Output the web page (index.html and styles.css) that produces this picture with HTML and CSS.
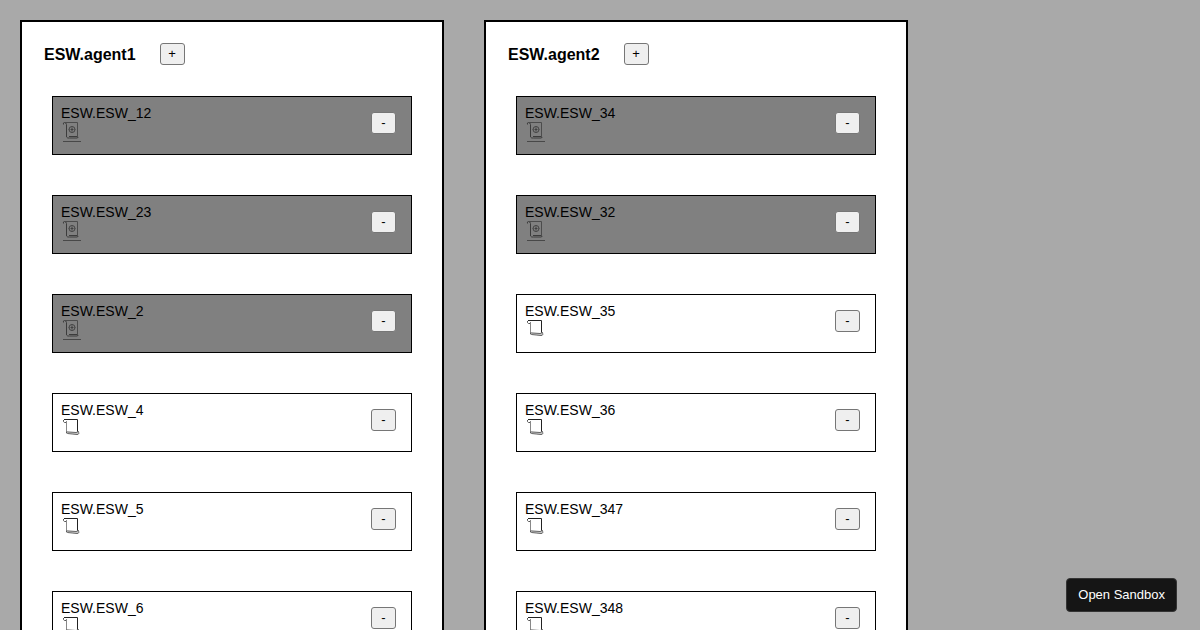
FILE: index.html
```html
<!DOCTYPE html>
<html lang="en">
<head>
    <meta charset="UTF-8">
    <meta name="viewport" content="width=device-width, initial-scale=1.0">
    <title>ESW agents</title>
    <link rel="stylesheet" href="styles.css">
</head>
<body>
    <!-- shared icons -->
    <svg class="icon-defs" aria-hidden="true">
        <symbol id="scroll" viewBox="0 0 20 24">
            <path d="M5.500 15V3" fill="none" stroke="#888"/>
            <path d="M5 4.500H3.500Q2 4 2.500 2" fill="none" stroke="#555"/>
            <path d="M3 1.500H16.500V13.500" fill="none" stroke="#222"/>
            <path d="M5 14.500Q6 13.500 8 14L15 14.500Q17 14.500 17 13Q19 16.500 16 16.500Q11 16 6.500 15.500Z" fill="#ccc" stroke="#444" stroke-width="0.800"/>
        </symbol>
        <symbol id="certificate" viewBox="0 0 20 24">
            <path d="M5.500 16V3.500Q5 1.500 3.500 1.500Q1.800 1.500 2.500 3.500" fill="none" stroke="#3c3c3c"/>
            <path d="M3.500 1.500H16.500V15" fill="none" stroke="#4c4c4c"/>
            <path d="M5.500 16Q6.500 17.500 8.500 17H16Q18 16.500 16.500 15.500H8" fill="none" stroke="#3c3c3c"/>
            <circle cx="11" cy="8.500" r="3" fill="none" stroke="#444"/>
            <circle cx="11" cy="8.500" r="1" fill="#333"/>
            <path d="M11 5V12M7.500 8.500H14.500" fill="none" stroke="#444" stroke-width="0.500"/>
            <path d="M2 20.500H20" fill="none" stroke="#484848"/>
        </symbol>
    </svg>

    <main class="board">
        <section class="agent">
            <header class="agent-header">
                <h2 class="agent-name">ESW.agent1</h2>
                <button type="button" aria-label="Add to ESW.agent1">+</button>
            </header>
            <div class="card-list">
                <div class="card done">
                    <div class="card-info">
                        <span>ESW.ESW_12</span>
                        <svg class="icon"><use href="#certificate"/></svg>
                    </div>
                    <button type="button">-</button>
                </div>
                <div class="card done">
                    <div class="card-info">
                        <span>ESW.ESW_23</span>
                        <svg class="icon"><use href="#certificate"/></svg>
                    </div>
                    <button type="button">-</button>
                </div>
                <div class="card done">
                    <div class="card-info">
                        <span>ESW.ESW_2</span>
                        <svg class="icon"><use href="#certificate"/></svg>
                    </div>
                    <button type="button">-</button>
                </div>
                <div class="card">
                    <div class="card-info">
                        <span>ESW.ESW_4</span>
                        <svg class="icon"><use href="#scroll"/></svg>
                    </div>
                    <button type="button">-</button>
                </div>
                <div class="card">
                    <div class="card-info">
                        <span>ESW.ESW_5</span>
                        <svg class="icon"><use href="#scroll"/></svg>
                    </div>
                    <button type="button">-</button>
                </div>
                <div class="card">
                    <div class="card-info">
                        <span>ESW.ESW_6</span>
                        <svg class="icon"><use href="#scroll"/></svg>
                    </div>
                    <button type="button">-</button>
                </div>
            </div>
        </section>

        <section class="agent">
            <header class="agent-header">
                <h2 class="agent-name">ESW.agent2</h2>
                <button type="button" aria-label="Add to ESW.agent2">+</button>
            </header>
            <div class="card-list">
                <div class="card done">
                    <div class="card-info">
                        <span>ESW.ESW_34</span>
                        <svg class="icon"><use href="#certificate"/></svg>
                    </div>
                    <button type="button">-</button>
                </div>
                <div class="card done">
                    <div class="card-info">
                        <span>ESW.ESW_32</span>
                        <svg class="icon"><use href="#certificate"/></svg>
                    </div>
                    <button type="button">-</button>
                </div>
                <div class="card">
                    <div class="card-info">
                        <span>ESW.ESW_35</span>
                        <svg class="icon"><use href="#scroll"/></svg>
                    </div>
                    <button type="button">-</button>
                </div>
                <div class="card">
                    <div class="card-info">
                        <span>ESW.ESW_36</span>
                        <svg class="icon"><use href="#scroll"/></svg>
                    </div>
                    <button type="button">-</button>
                </div>
                <div class="card">
                    <div class="card-info">
                        <span>ESW.ESW_347</span>
                        <svg class="icon"><use href="#scroll"/></svg>
                    </div>
                    <button type="button">-</button>
                </div>
                <div class="card">
                    <div class="card-info">
                        <span>ESW.ESW_348</span>
                        <svg class="icon"><use href="#scroll"/></svg>
                    </div>
                    <button type="button">-</button>
                </div>
            </div>
        </section>
    </main>

    <button type="button" class="sandbox-button">Open Sandbox</button>
</body>
</html>
```
FILE: styles.css
```css
* {
    box-sizing: border-box;
}

body {
    margin: 0;
    background-color: darkgray;
    color: #000;
    font-family: Helvetica, "Liberation Sans", Arial, sans-serif;
    font-size: 14px;
    line-height: 16px;
}

button {
    border: 1px solid #767676;
    border-radius: 3px;
    background-color: #efefef;
    color: #000;
    font-family: inherit;
    font-size: 13px;
    line-height: 18px;
}

.icon-defs {
    display: none;
}

.board {
    display: flex;
    align-items: flex-start;
    gap: 40px;
    padding: 20px;
}

.agent {
    width: 424px;
    padding: 20px 22px;
    border: 2px solid #000;
    background-color: #fff;
}

.agent-header {
    display: flex;
    align-items: center;
    gap: 24px;
    height: 24px;
}

.agent-name {
    margin: 0;
    padding-top: 2px;
    font-size: 16px;
    line-height: 20px;
}

.card-list {
    display: flex;
    flex-direction: column;
    gap: 40px;
    padding: 30px 8px 20px;
}

.card {
    display: flex;
    justify-content: space-between;
    align-items: flex-start;
    padding: 8px 15px 8px 8px;
    border: 1px solid #000;
}

.card.done {
    background-color: gray;
}

.card > button {
    margin-top: 7px;
}

.card button,
.agent-header button {
    width: 25px;
    height: 22px;
    padding: 0;
}

.card-info {
    display: flex;
    flex-direction: column;
    height: 41px;
}

.icon {
    width: 20px;
    height: 24px;
}

.sandbox-button {
    position: fixed;
    right: 23px;
    bottom: 18px;
    padding: 7px 11px;
    border: 1px solid #343434;
    border-radius: 4px;
    background-color: #151515;
    color: #fff;
    font-size: 13px;
}
```
